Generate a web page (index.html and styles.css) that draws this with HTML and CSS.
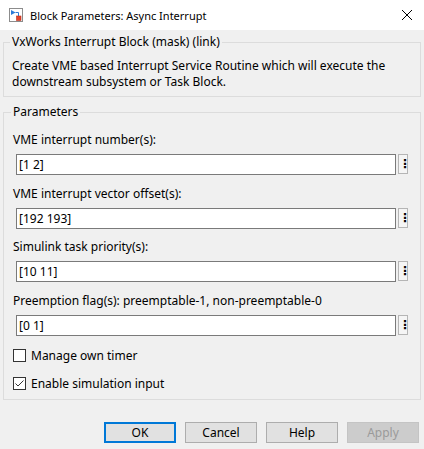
FILE: index.html
```html
<!DOCTYPE html>
<html lang="en">
<head>
<meta charset="UTF-8">
<meta name="viewport" content="width=device-width, initial-scale=1.0">
<title>Block Parameters: Async Interrupt</title>
<link rel="stylesheet" href="styles.css">
</head>
<body>

<div class="titlebar">
  <svg class="app-icon" width="14" height="14" viewBox="0 0 14 14">
    <rect x="0.5" y="0.5" width="13" height="13" fill="#fff" stroke="#8c8c8c"/>
    <path d="M2 2 L6.5 4.5 L2 7 Z" fill="#2b7bd6"/>
    <path d="M6.5 4.5 H9.5 V8" fill="none" stroke="#2b7bd6" stroke-width="1"/>
    <rect x="7.5" y="8" width="4.5" height="4.5" fill="#e0442c" stroke="#b8301c" stroke-width="0.6"/>
  </svg>
  <span class="title">Block Parameters: Async Interrupt</span>
  <svg class="close" width="12" height="12" viewBox="0 0 12 12">
    <path d="M1 1 L11 11 M11 1 L1 11" stroke="#000" stroke-width="1"/>
  </svg>
</div>

<fieldset class="group">
  <legend>VxWorks Interrupt Block (mask) (link)</legend>
  <p class="desc">Create VME based Interrupt Service Routine which will execute the<br>downstream subsystem or Task Block.</p>
</fieldset>

<fieldset class="group params">
  <legend>Parameters</legend>

  <div class="field">
    <label>VME interrupt number(s):</label>
    <div class="input-row">
      <input class="edit" type="text" value="[1 2]">
      <button class="more">&#8942;</button>
    </div>
  </div>

  <div class="field">
    <label>VME interrupt vector offset(s):</label>
    <div class="input-row">
      <input class="edit" type="text" value="[192 193]">
      <button class="more">&#8942;</button>
    </div>
  </div>

  <div class="field">
    <label>Simulink task priority(s):</label>
    <div class="input-row">
      <input class="edit" type="text" value="[10 11]">
      <button class="more">&#8942;</button>
    </div>
  </div>

  <div class="field">
    <label>Preemption flag(s): preemptable-1, non-preemptable-0</label>
    <div class="input-row">
      <input class="edit" type="text" value="[0 1]">
      <button class="more">&#8942;</button>
    </div>
  </div>

  <div class="check">
    <span class="box"></span>
    <span>Manage own timer</span>
  </div>
  <div class="check">
    <span class="box">
      <svg width="11" height="11" viewBox="0 0 11 11"><path d="M1.5 5.5 L4 8 L9.5 2.5" fill="none" stroke="#333" stroke-width="1"/></svg>
    </span>
    <span>Enable simulation input</span>
  </div>
</fieldset>

<div class="buttons">
  <button class="btn default">OK</button>
  <button class="btn">Cancel</button>
  <button class="btn">Help</button>
  <button class="btn" disabled>Apply</button>
</div>

</body>
</html>
```

FILE: styles.css
```css
body {
  margin: 0;
  width: 424px;
  height: 449px;
  overflow: hidden;
  font-family: "Noto Sans", "Open Sans", sans-serif;
  font-size: 12px;
  color: #000;
  background-color: #f0f0f0;
}
.titlebar {
  display: flex;
  align-items: center;
  height: 30px;
  padding: 0 11px 0 9px;
  background-color: #fff;
}
.app-icon {
  flex: none;
  margin-right: 7px;
}
.title {
  flex: 1;
  font-size: 11px;
}
.close {
  flex: none;
}
.group {
  margin: 4px 3px 0 3px;
  padding: 0 8px 6px 8px;
  border: 1px solid #dcdcdc;
}
.group legend {
  margin-left: -2px;
  padding: 0 2px;
  line-height: 16px;
}
.desc {
  margin: 8px 0 0 0;
  line-height: 16px;
}
.params {
  margin-top: 7px;
  padding: 12px 8px 6px 9px;
}
.field {
  margin-bottom: 10.7px;
}
.field label {
  display: block;
  line-height: 16px;
  margin-bottom: 6px;
}
.input-row {
  display: flex;
  align-items: flex-start;
  margin-left: 3px;
}
.edit {
  width: 380px;
  height: 21px;
  box-sizing: border-box;
  margin: 0;
  padding: 0 2px;
  border: 1px solid #7a7a7a;
  background: #fff;
  font-family: inherit;
  font-size: 12px;
  color: #000;
}
.more {
  width: 10px;
  height: 20px;
  margin: 0 0 0 2px;
  padding: 0;
  border: 1px solid #b5b5b5;
  background: #f5f5f5;
  font-family: "DejaVu Sans", sans-serif;
  font-size: 12px;
  font-weight: bold;
  line-height: 18px;
  color: #000;
}
.field:last-of-type {
  margin-bottom: 8px;
}
.check {
  display: flex;
  align-items: center;
  height: 18px;
  margin-bottom: 10px;
}
.check:last-child {
  margin-bottom: 0;
}
.box {
  display: flex;
  align-items: center;
  justify-content: center;
  width: 13px;
  height: 13px;
  box-sizing: border-box;
  margin-right: 5px;
  border: 1px solid #333;
  background: #fff;
}
.buttons {
  display: flex;
  justify-content: flex-end;
  gap: 9px;
  margin: 22px 5px 0 0;
}
.btn {
  width: 72px;
  height: 21px;
  margin: 0;
  padding: 0;
  border: 1px solid #adadad;
  background-color: #e1e1e1;
  font-family: inherit;
  font-size: 12px;
  color: #000;
}
.btn.default {
  border: 2px solid #0078d7;
}
.btn:disabled {
  border-color: #c4c4c4;
  background-color: #cccccc;
  color: #9a9a9a;
}
```
